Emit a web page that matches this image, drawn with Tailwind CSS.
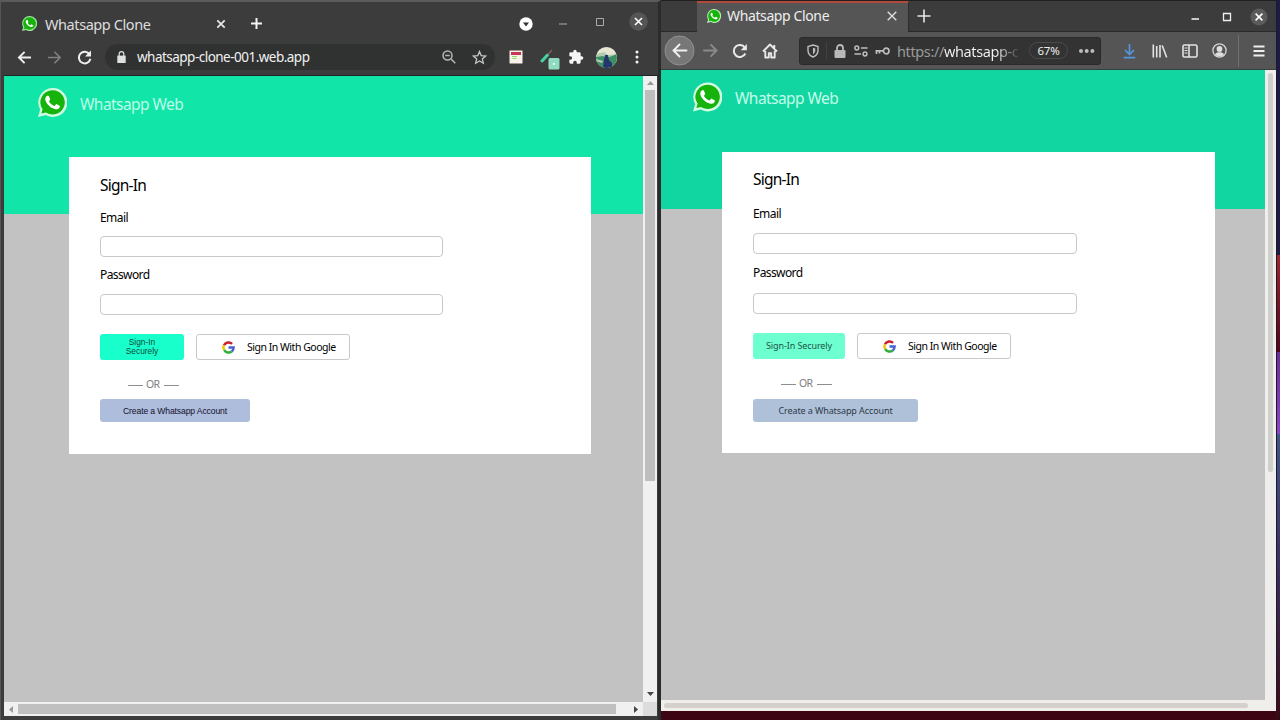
<!DOCTYPE html>
<html lang="en">
<head>
  <meta charset="UTF-8" />
  <meta name="viewport" content="width=device-width, initial-scale=1.0" />
  <title>Whatsapp Clone</title>
  <script src="https://cdn.jsdelivr.net/npm/@tailwindcss/browser@4"></script>
</head>
<body class="w-[1280px] h-[720px] overflow-hidden bg-[#3d0513] font-['Noto_Sans',sans-serif]">

  <!-- Shared icons -->
  <svg class="hidden">
    <symbol id="whatsapp" viewBox="0 0 24 24">
      <path fill="currentColor" d="M12 0A11.9 11.9 0 0 0 1.8 17.8L0 24l6.4-1.6A12 12 0 1 0 12 0z" />
      <path fill="#16b30c" d="M12 1.9a10 10 0 0 0-8.2 15.7l-1 3.6 3.8-1A10 10 0 1 0 12 1.9z" />
      <path fill="#fff" d="M17.472 14.382c-.297-.149-1.758-.867-2.03-.967-.273-.099-.471-.148-.67.15-.197.297-.767.966-.94 1.164-.173.199-.347.223-.644.075-.297-.15-1.255-.463-2.39-1.475-.883-.788-1.48-1.761-1.653-2.059-.173-.297-.018-.458.13-.606.134-.133.298-.347.446-.52.149-.174.198-.298.298-.497.099-.198.05-.371-.025-.52-.075-.149-.669-1.612-.916-2.207-.242-.579-.487-.5-.669-.51-.173-.008-.371-.01-.57-.01-.198 0-.52.074-.792.372-.272.297-1.04 1.016-1.04 2.479 0 1.462 1.065 2.875 1.213 3.074.149.198 2.096 3.2 5.077 4.487.709.306 1.262.489 1.694.625.712.227 1.36.195 1.871.118.571-.085 1.758-.719 2.006-1.413.248-.694.248-1.289.173-1.413-.074-.124-.272-.198-.57-.347" />
    </symbol>
    <symbol id="google" viewBox="0 0 24 24">
      <g fill="none" stroke-width="4.6">
        <path stroke="#c9202b" d="M3.6 8A9.4 9.4 0 0 1 18.600 5.300" />
        <path stroke="#f2c500" d="M4.100 16.700a9.400 9.400 0 0 1-.5-8.7" />
        <path stroke="#2fae3f" d="M18 19.300A9.400 9.400 0 0 1 4.100 16.700" />
        <path stroke="#4a62cf" d="M12 12h9.400a9.400 9.400 0 0 1-3.400 7.300" />
      </g>
    </symbol>
  </svg>

  <div class="flex h-[720px]">

    <!-- Chrome window -->
    <div class="flex flex-col w-[661px] h-[720px] bg-[#3c3c3c] border-t-2 border-t-[#5b5b5e] border-l border-l-[#555] border-r-3 border-r-[#2a2c2c] pl-[3px]">
      <div class="flex items-center h-[41px] pl-[18px] pt-[2px] shrink-0 text-[#dedede]">
        <svg class="w-[15px] h-[15px] text-[#9be29a]"><use href="#whatsapp" /></svg>
        <span class="ml-[8px] w-[106px] text-[14.5px] leading-5 whitespace-nowrap tracking-[-0.42px]">Whatsapp Clone</span>
        <svg class="ml-[65px] w-[10px] h-[10px]" viewBox="0 0 10 10" stroke="#e8e8e8" stroke-width="1.7"><path d="M1.300 1.300l7.400 7.400M8.700 1.300l-7.400 7.400" /></svg>
        <svg class="ml-[24px] w-[13px] h-[13px]" viewBox="0 0 13 13" stroke="#f4f4f4" stroke-width="2"><path d="M6.500 1v11M1 6.500h11" /></svg>
        <svg class="ml-[256px] w-[14px] h-[14px]" viewBox="0 0 14 14"><circle cx="7" cy="7" r="6.700" fill="#fff" /><path d="M4 5.400h6L7 9.600z" fill="#333" /></svg>
        <svg class="ml-[25px] w-[10px] h-[10px]" viewBox="0 0 10 10" stroke="#999" stroke-width="1.200"><path d="M1 5h8" /></svg>
        <svg class="ml-[27px] -mt-[4px] w-[10px] h-[10px]" viewBox="0 0 10 10" stroke="#aaa" fill="none"><path d="M1.500 1.500h7v7h-7z" /></svg>
        <svg class="ml-[24px] -mt-[4px] w-[19px] h-[19px]" viewBox="0 0 19 19" stroke="#fff" stroke-width="1.600"><circle cx="9.500" cy="9.500" r="9.300" fill="#555" stroke="none" /><path d="M6 6l7 7M13 6l-7 7" /></svg>
      </div>

      <div class="flex items-center h-[33px] pb-[4px] pl-[13px] shrink-0 border-b border-b-[#1e2421]">
        <svg class="w-[15px] h-[15px]" viewBox="0 0 15 15" fill="none" stroke="#f0f0f0" stroke-width="1.900"><path d="M14 7.500H2M7.600 1.800L1.900 7.500l5.700 5.700" /></svg>
        <svg class="ml-[15px] w-[15px] h-[15px]" viewBox="0 0 15 15" fill="none" stroke="#818181" stroke-width="1.600"><path d="M1 7.500h12M7.400 1.800l5.700 5.700-5.700 5.700" /></svg>
        <svg class="ml-[15px] w-[15px] h-[15px]" viewBox="0 0 15 15" fill="none" stroke="#f0f0f0" stroke-width="2"><path d="M12.600 4.400a5.800 5.800 0 1 0 .8 4.400" /><path d="M14 .6v6H8z" fill="#f0f0f0" stroke="none" /></svg>
        <div class="flex items-center ml-[13px] w-[390px] h-[26px] rounded-full bg-[#303131] pl-[12px]">
          <svg class="w-[9px] h-[12px]" viewBox="0 0 9 12"><path fill="#e0e0e0" d="M.3 4.600h8.400V12H.3z" /><path d="M2.200 5V3a2.300 2.300 0 0 1 4.600 0v2" fill="none" stroke="#e0e0e0" stroke-width="1.200" /></svg>
          <span class="ml-[11px] w-[174px] text-[13.5px] leading-5 text-[#f1f1f1] whitespace-nowrap tracking-[-0.52px]">whatsapp-clone-001.web.app</span>
          <svg class="ml-[131px] w-[14px] h-[14px]" viewBox="0 0 14 14" fill="none" stroke="#b5b5b5" stroke-width="1.500"><circle cx="5.500" cy="5.500" r="4.500" /><path d="M9 9l4.300 4.300M3.200 5.500h4.600" /></svg>
          <svg class="ml-[16px] w-[15px] h-[15px]" viewBox="0 0 15 15" fill="none" stroke="#c5c5c5" stroke-width="1.300"><path d="M7.500 1.500l1.700 4.100 4.400.4-3.300 2.900 1 4.300-3.800-2.300-3.800 2.300 1-4.300L1.400 6l4.400-.4z" /></svg>
        </div>
        <svg class="ml-[14px] w-[14px] h-[14px]" viewBox="0 0 14 14"><path fill="#f6f1e9" d="M.5.500h13v13H.5z" /><path fill="#c9365c" d="M2 2h10v3H2z" /><path stroke="#8cde62" d="M3 6.500h5M3.500 8.500h4" /></svg>
        <svg class="ml-[17px] mt-[5px] w-[20px] h-[21px]" viewBox="0 0 20 21"><path d="M2 12l5.500-6" stroke="#45d3a5" stroke-width="3" stroke-linecap="round" /><path d="M8 5.500l4-4.500" stroke="#8a5c5c" stroke-width="1.500" /><rect x="8.500" y="9" width="11" height="11.500" rx="1.500" fill="#8fdcc0" /><path d="M12.800 15h2.200" stroke="#eafff6" stroke-width="1.500" /></svg>
        <svg class="ml-[8px] w-[16px] h-[16px]" viewBox="0 0 24 24" fill="#f5f5f5"><path d="M20.500 11H19V7a2 2 0 0 0-2-2h-4V3.500a2.500 2.500 0 0 0-5 0V5H4a2 2 0 0 0-2 2v3.800h1.500a2.700 2.700 0 0 1 0 5.400H2V20a2 2 0 0 0 2 2h3.800v-1.500a2.700 2.700 0 0 1 5.400 0V22H17a2 2 0 0 0 2-2v-4h1.500a2.500 2.500 0 0 0 0-5z" /></svg>
        <div class="ml-[12px] w-[21px] h-[21px] rounded-full overflow-hidden bg-[#e8e6d2]">
          <svg class="w-[21px] h-[21px]" viewBox="0 0 21 21"><path fill="#b3ccb0" d="M0 7l8-2 4 3 9-1v8H0z" /><path fill="#3d9065" d="M0 10l7-1 4 2 10-4v14H0z" /><path fill="#b8cabd" d="M0 12l7 2-1 2-6-2z" /><path fill="#25366f" d="M9 8h3l1 5 3 3v5H7l1-8z" /></svg>
        </div>
        <svg class="ml-[17px] w-[6px] h-[14px]" viewBox="0 0 6 14" fill="#f5f5f5"><circle cx="3" cy="2" r="1.500" /><circle cx="3" cy="7" r="1.500" /><circle cx="3" cy="12" r="1.500" /></svg>
      </div>

      <div class="flex w-[653px] h-[626px] shrink-0">
        <div class="w-[639px] h-[626px] bg-[#c2c2c2]">
          <div class="flex h-[138px] items-start bg-[#12e5a8] pl-[34px] pt-[12px]">
            <svg class="w-[29px] h-[29px] text-[#d3fbe3]"><use href="#whatsapp" /></svg>
            <span class="ml-[13px] mt-[4px] text-[15.5px] leading-6 text-[#bdfde8] whitespace-nowrap tracking-[-0.55px]">Whatsapp Web</span>
          </div>
          <div class="relative ml-[65px] -mt-[57px] w-[522px] h-[297px] bg-white pl-[31px] pt-[17px] text-black">
            <h1 class="h-[22px] text-[15.5px] leading-[22px] tracking-[-0.75px]">Sign-In</h1>
            <label class="block mt-[13px] h-[18px] text-[12px] leading-[18px] tracking-[-0.55px]">Email</label>
            <input type="text" class="block mt-[9px] w-[343px] h-[21px] rounded-[4px] border border-[#c9c9c9]" />
            <label class="block mt-[9px] h-[18px] text-[12px] leading-[18px] tracking-[-0.6px]">Password</label>
            <input type="password" class="block mt-[10px] w-[343px] h-[21px] rounded-[4px] border border-[#c9c9c9]" />
            <div class="flex mt-[19px] h-[26px] gap-[12px]">
              <button class="w-[84px] h-[26px] rounded-[3px] bg-[#19ffcb] px-4 font-['Liberation_Sans',sans-serif] text-[8.4px] leading-[9px] text-[#0b4b3c]">Sign-In Securely</button>
              <button class="flex items-center w-[154px] h-[26px] rounded-[3px] border border-[#c9c9c9] pl-[25px] text-[10.5px] leading-4 whitespace-nowrap tracking-[-0.48px]">
                <svg class="mr-[12px] w-[13px] h-[13px]"><use href="#google" /></svg>Sign In With Google
              </button>
            </div>
            <div class="flex items-center mt-[16px] h-[18px] pl-[28px] gap-[3px] text-[10.5px] text-[#808080]">
              <span class="w-[15px] h-px bg-[#8d8d8d]"></span><span class="w-[15px] tracking-[-0.6px]">OR</span><span class="w-[15px] h-px bg-[#8d8d8d]"></span>
            </div>
            <button class="block mt-[5px] w-[150px] h-[23px] rounded-[3px] bg-[#afbddd] font-['Liberation_Sans',sans-serif] text-[8.6px] leading-3 text-[#111129] whitespace-nowrap tracking-[-0.12px]">Create a Whatsapp Account</button>
          </div>
        </div>
        <div class="flex flex-col items-center w-[14px] h-[626px] bg-[#f0f0f0]">
          <svg class="mt-[5px] w-[7px] h-[4px] shrink-0" viewBox="0 0 7 4"><path d="M0 4l3.500-4L7 4z" fill="#999" /></svg>
          <div class="mt-[5px] w-[10px] h-[391px] shrink-0 bg-[#bebebe]"></div>
          <svg class="mt-auto mb-[6px] w-[7px] h-[4px] shrink-0" viewBox="0 0 7 4"><path d="M0 0l3.500 4L7 0z" fill="#444" /></svg>
        </div>
      </div>

      <div class="flex items-center w-[653px] h-[14px] shrink-0 bg-[#f0f0f0]">
        <svg class="ml-[5px] w-[4px] h-[7px]" viewBox="0 0 4 7"><path d="M4 0L0 3.500 4 7z" fill="#999" /></svg>
        <div class="ml-[5px] w-[598px] h-[10px] bg-[#c0c0c0]"></div>
        <svg class="ml-[18px] w-[4px] h-[7px]" viewBox="0 0 4 7"><path d="M0 0l4 3.500L0 7z" fill="#444" /></svg>
        <div class="ml-auto w-[14px] h-[14px] bg-[#dcdcdc]"></div>
      </div>
    </div>

    <!-- Firefox window -->
    <div class="w-[615px] h-[711px] bg-[#3c3c3c]">
      <div class="flex h-[32px] border-b border-b-[#292929] border-t border-t-[#202020]">
        <div class="flex items-center ml-[36px] w-[212px] h-[31px] bg-[#555] border-t-2 border-t-[#b04a3a] border-r border-r-[#2c2c2c] pl-[10px] pb-[3px]">
          <svg class="w-[14px] h-[14px] text-[#b5eeb0]"><use href="#whatsapp" /></svg>
          <span class="ml-[6px] w-[104px] text-[14px] leading-5 text-[#eee] whitespace-nowrap tracking-[-0.38px]">Whatsapp Clone</span>
          <svg class="ml-[56px] w-[10px] h-[10px]" viewBox="0 0 10 10" stroke="#ddd" stroke-width="1.400"><path d="M.700.700l8.600 8.600M9.300.700L.7 9.300" /></svg>
        </div>
        <svg class="ml-[8px] mt-[8px] w-[14px] h-[14px]" viewBox="0 0 14 14" stroke="#e5e5e5" stroke-width="1.600"><path d="M7 .5v13M.5 7h13" /></svg>
        <svg class="ml-auto mt-[11px] w-[10px] h-[10px]" viewBox="0 0 10 10" stroke="#eee" stroke-width="1.600"><path d="M1.500 7h7.500" /></svg>
        <svg class="ml-[22px] mt-[11px] w-[10px] h-[10px]" viewBox="0 0 10 10" stroke="#eee" stroke-width="1.300" fill="none"><path d="M1.500 1.500h7v7h-7z" /></svg>
        <svg class="ml-[18px] mr-[8px] mt-[7px] w-[18px] h-[18px]" viewBox="0 0 18 18" stroke="#fff" stroke-width="1.600"><circle cx="9" cy="9" r="8.500" fill="#5b5b5b" stroke="none" /><path d="M5.600 5.600l6.800 6.800M12.400 5.600l-6.800 6.800" /></svg>
      </div>

      <div class="flex items-center h-[38px] bg-[#555] pl-[3px] border-b border-b-[#35423d]">
        <svg class="w-[31px] h-[31px]" viewBox="0 0 31 31" fill="none"><circle cx="15.500" cy="15.500" r="14.500" fill="#777" stroke="#929292" /><path d="M22.500 15.500H9.500M15.500 9.500l-6 6 6 6" stroke="#efefef" stroke-width="1.900" stroke-linecap="round" /></svg>
        <svg class="ml-[8px] w-[15px] h-[15px]" viewBox="0 0 15 15" fill="none" stroke="#8b8b8b" stroke-width="1.800" stroke-linecap="round"><path d="M1 7.500h12.500M8 1.800l5.700 5.700L8 13.200" /></svg>
        <svg class="ml-[14px] w-[16px] h-[16px]" viewBox="0 0 16 16" fill="none" stroke="#e8e8e8" stroke-width="2"><path d="M13 5A6 6 0 1 0 13.300 10.500" /><path d="M14.900 1v6.200H8.700z" fill="#e8e8e8" stroke="none" /></svg>
        <svg class="ml-[14px] w-[16px] h-[16px]" viewBox="0 0 16 16" fill="none" stroke="#e8e8e8" stroke-width="1.900" stroke-linejoin="round"><path d="M1 8.500L8 1.500l7 7M3.300 8v6.500h3.500v-4.300h2.400v4.300h3.500V8M12.300 2v4" /></svg>
        <div class="flex items-center ml-[21px] w-[302px] h-[28px] rounded-[3px] bg-[#333] border border-[#2a2a2a] pl-[6px]">
          <svg class="w-[14px] h-[14px]" viewBox="0 0 14 14" fill="none" stroke="#bdbdbd" stroke-width="1.400"><path d="M7 1l5 1.500v3.700c0 3.300-2 5.600-5 6.800-3-1.200-5-3.500-5-6.800V2.500z" /><path d="M7 3.800v6.400c1.500-.9 2.300-2.200 2.300-4V4.400z" fill="#bdbdbd" stroke="none" /></svg>
          <span class="ml-[6px] w-px h-[18px] bg-[#424242]"></span>
          <svg class="ml-[7px] w-[12px] h-[14px]" viewBox="0 0 12 14"><rect x=".5" y="6" width="11" height="8" rx="1.200" fill="#b9b9b9" /><path d="M3 7V4a3 3 0 0 1 6 0v3" fill="none" stroke="#b9b9b9" stroke-width="1.800" /></svg>
          <svg class="ml-[8px] w-[14px] h-[12px]" viewBox="0 0 14 12" fill="none" stroke="#bdbdbd" stroke-width="1.500" stroke-linecap="round"><circle cx="2.800" cy="3" r="1.900" /><path d="M7.500 3h5.500M1 9h5.500" /><circle cx="11" cy="9" r="1.900" /></svg>
          <svg class="ml-[7px] w-[15px] h-[10px]" viewBox="0 0 15 10" fill="none" stroke="#bdbdbd" stroke-width="1.700"><circle cx="11.200" cy="5" r="2.800" /><path d="M8.400 4.800H.5M1.500 5v3M4.500 5v2.600" /></svg>
          <span class="ml-[7px] w-[125px] text-[14.5px] leading-5 whitespace-nowrap text-[#9a9a9a] tracking-[-0.38px]">https://<span class="bg-linear-to-r from-[#f5f5f5] from-70% to-[#4a4a4a] bg-clip-text text-transparent">whatsapp-c</span></span>
          <span class="ml-[7px] w-[39px] h-[17px] rounded-full border border-[#4b4b4b] text-center text-[11.5px] leading-[15px] text-[#eee] tracking-[-0.2px]">67%</span>
          <svg class="ml-[10px] w-[17px] h-[6px]" viewBox="0 0 17 6" fill="#bcbcbc"><circle cx="3" cy="3" r="2" /><circle cx="8.700" cy="3" r="2" /><circle cx="14.400" cy="3" r="2" /></svg>
        </div>
        <svg class="ml-[22px] w-[13px] h-[16px]" viewBox="0 0 13 16" fill="none" stroke="#5495e0" stroke-width="1.700"><path d="M6.500 1v10M2 7l4.500 4.500L11 7M.8 14.700h11.400" /></svg>
        <svg class="ml-[16px] w-[16px] h-[14px]" viewBox="0 0 16 14" stroke="#e3e3e3" stroke-width="1.600"><path d="M1.300.5v13M4.700 2v11.500M8 1v12.500M10.200 1.500l4.500 12" /></svg>
        <svg class="ml-[14px] w-[16px] h-[14px]" viewBox="0 0 16 14" fill="none" stroke="#e3e3e3" stroke-width="1.600"><rect x="1" y="1" width="14" height="12" rx="1.500" /><path d="M7 1v12" /><path d="M2.500 4h3M2.500 6.500h3M2.500 9h3" stroke-width="1" /></svg>
        <svg class="ml-[14px] w-[15px] h-[15px]" viewBox="0 0 15 15"><circle cx="7.500" cy="7.500" r="6.600" fill="none" stroke="#d5d5d5" stroke-width="1.300" /><circle cx="7.500" cy="6" r="2.900" fill="#dedede" /><path d="M3 11.500c1-2 2.500-2.300 4.500-2.300s3.500.3 4.500 2.300a6 6 0 0 1-9 0z" fill="#dedede" /></svg>
        <span class="ml-[11px] w-px h-[32px] bg-[#707070]"></span>
        <svg class="ml-[14px] w-[12px] h-[12px]" viewBox="0 0 12 12" stroke="#eee" stroke-width="1.800"><path d="M.5 1.500h11M.5 6h11M.5 10.500h11" /></svg>
      </div>

      <div class="flex w-[615px] h-[630px]">
        <div class="w-[604px] h-[630px] bg-[#c2c2c2]">
          <div class="flex h-[139px] items-start bg-[#12d6a2] pl-[32px] pt-[12px]">
            <svg class="w-[29px] h-[30px] text-[#d3fbe3]"><use href="#whatsapp" /></svg>
            <span class="ml-[13px] mt-[4px] text-[15.5px] leading-6 text-[#c3fdea] whitespace-nowrap tracking-[-0.55px]">Whatsapp Web</span>
          </div>
          <div class="relative ml-[61px] -mt-[57px] w-[493px] h-[301px] bg-white pl-[31px] pt-[16px] text-black">
            <h1 class="h-[22px] text-[15.5px] leading-[22px] tracking-[-0.75px]">Sign-In</h1>
            <label class="block mt-[15px] h-[18px] text-[12px] leading-[18px] tracking-[-0.55px]">Email</label>
            <input type="text" class="block mt-[10px] w-[324px] h-[21px] rounded-[4px] border border-[#c9c9c9]" />
            <label class="block mt-[10px] h-[18px] text-[12px] leading-[18px] tracking-[-0.6px]">Password</label>
            <input type="password" class="block mt-[11px] w-[324px] h-[21px] rounded-[4px] border border-[#c9c9c9]" />
            <div class="flex mt-[19px] h-[26px] gap-[12px]">
              <button class="w-[92px] h-[26px] rounded-[3px] bg-[#6effd0] text-[9px] leading-3 text-[#1c5645] whitespace-nowrap tracking-[-0.1px]">Sign-In Securely</button>
              <button class="flex items-center w-[154px] h-[26px] rounded-[3px] border border-[#c9c9c9] pl-[25px] text-[10.5px] leading-4 whitespace-nowrap tracking-[-0.48px]">
                <svg class="mr-[12px] w-[13px] h-[13px]"><use href="#google" /></svg>Sign In With Google
              </button>
            </div>
            <div class="flex items-center mt-[16px] h-[18px] pl-[28px] gap-[3px] text-[10.5px] text-[#808080]">
              <span class="w-[15px] h-px bg-[#8d8d8d]"></span><span class="w-[15px] tracking-[-0.6px]">OR</span><span class="w-[15px] h-px bg-[#8d8d8d]"></span>
            </div>
            <button class="block mt-[6px] w-[165px] h-[23px] rounded-[3px] bg-[#afc1d9] text-[9px] leading-3 text-[#2c3a48] whitespace-nowrap tracking-[-0.1px]">Create a Whatsapp Account</button>
          </div>
        </div>
        <div class="w-[11px] h-[630px] bg-[#efeeec] pl-[3px] pt-[3px]">
          <div class="w-[5px] h-[399px] rounded-full bg-[#cfcfcc]"></div>
        </div>
      </div>

      <div class="flex items-center w-[615px] h-[11px] bg-[#efeeeb] pl-[3px]">
        <div class="w-[584px] h-[5px] rounded-full bg-[#d5d0cb]"></div>
      </div>
    </div>

    <!-- Desktop wallpaper -->
    <div class="w-[4px] h-[720px] border-l border-l-[#1b1b22]">
      <div class="h-[255px] bg-[#1e1a4a]"></div>
      <div class="h-[97px] bg-linear-to-b from-[#a12531] to-[#55031a]"></div>
      <div class="h-[82px] bg-linear-to-b from-[#6c2d9c] to-[#8b42cc]"></div>
      <div class="h-[286px] bg-linear-to-b from-[#40558c] via-[#3b2a60] to-[#3d0513]"></div>
    </div>
  </div>
</body>
</html>
